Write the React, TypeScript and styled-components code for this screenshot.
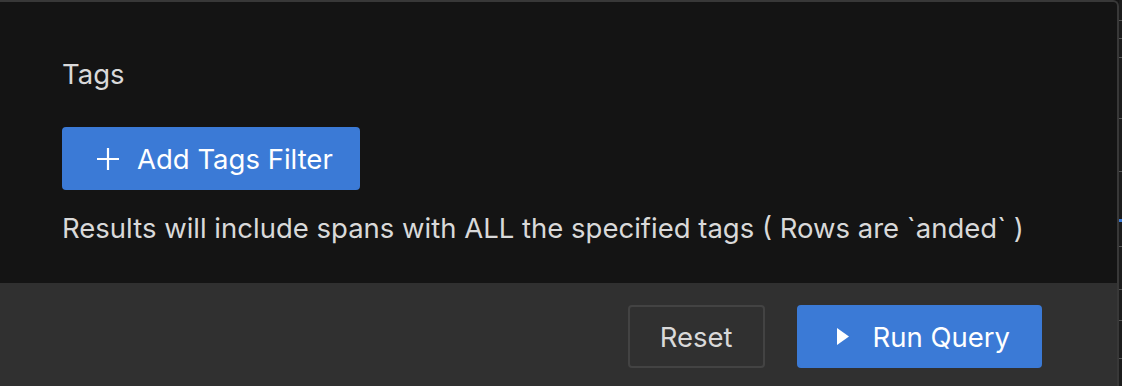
import React from "react";
import styled, { createGlobalStyle } from "styled-components";

const Global = createGlobalStyle`
  html, body { margin: 0; padding: 0; background: #141414; }
  body { font-family: Inter, "Noto Sans", sans-serif; -webkit-font-smoothing: antialiased; }
  #root { height: 386px; }
`;

const Page = styled.div`
  display: flex;
  width: 1122px;
  height: 386px;
  overflow: hidden;
`;

const Panel = styled.section`
  flex: 1;
  display: flex;
  flex-direction: column;
  border-top: 2px solid #383838;
  border-right: 2px solid #383838;
  border-top-right-radius: 6px;
  background: #141414;
  overflow: hidden;
`;

const Body = styled.div`
  flex: 1;
  padding: 56px 0 0 62px;
  display: flex;
  flex-direction: column;
  align-items: flex-start;
`;

const Label = styled.div`
  font-size: 27.5px;
  line-height: 32px;
  color: #d9d9d9;
  font-weight: 400;
`;

const Button = styled.button<{ $variant: "primary" | "secondary" }>`
  display: inline-flex;
  align-items: center;
  height: 63px;
  padding: 0 30px;
  border-radius: 4px;
  font-family: Inter, "Noto Sans", sans-serif;
  font-size: 27.5px;
  font-weight: 400;
  cursor: pointer;
  background: ${(p) => (p.$variant === "primary" ? "#3b7ad6" : "#303030")};
  color: ${(p) => (p.$variant === "primary" ? "#ffffff" : "#d9d9d9")};
  border: 2px solid ${(p) => (p.$variant === "primary" ? "#3b7ad6" : "#434343")};
`;

const AddButton = styled(Button)`
  margin-top: 37px;
  gap: 18px;
  padding-left: 33px;
  padding-right: 25px;
`;

const RunButton = styled(Button)`
  gap: 24px;
  padding-left: 38px;
  padding-right: 30px;
`;

const Hint = styled.p`
  margin: 20px 0 0;
  font-size: 27.5px;
  line-height: 36px;
  color: #d9d9d9;
`;

const Footer = styled.footer`
  height: 103px;
  box-sizing: border-box;
  flex: none;
  background: #303030;
  display: flex;
  align-items: flex-start;
  justify-content: flex-end;
  gap: 32px;
  padding: 22px 75px 0 0;
`;

const Strip = styled.div`
  width: 3px;
  flex: none;
  background:
    linear-gradient(#555 0 0) 0 20px / 3px 1px no-repeat,
    linear-gradient(#555 0 0) 0 38px / 3px 1px no-repeat,
    linear-gradient(#555 0 0) 0 57px / 3px 1px no-repeat,
    linear-gradient(#555 0 0) 0 118px / 3px 1px no-repeat,
    linear-gradient(#555 0 0) 0 171px / 3px 1px no-repeat,
    linear-gradient(#3b7ad6 0 0) 0 219px / 3px 3px no-repeat,
    linear-gradient(#555 0 0) 0 246px / 3px 1px no-repeat,
    linear-gradient(#555 0 0) 0 289px / 3px 1px no-repeat,
    linear-gradient(#555 0 0) 0 320px / 3px 1px no-repeat,
    linear-gradient(#555 0 0) 0 358px / 3px 1px no-repeat,
    #1c1c1c;
`;

const PlusIcon = () => (
  <svg width="22" height="22" viewBox="0 0 22 22" aria-hidden>
    <path d="M11 0v22M0 11h22" stroke="#fff" strokeWidth="2.2" fill="none" />
  </svg>
);

const PlayIcon = () => (
  <svg width="12" height="17" viewBox="0 0 12 17" aria-hidden>
    <path d="M0 0l12 8.5L0 17z" fill="#fff" />
  </svg>
);

export default function App() {
  return (
    <Page>
      <Global />
      <Panel>
        <Body>
          <Label>Tags</Label>
          <AddButton $variant="primary">
            <PlusIcon />
            Add Tags Filter
          </AddButton>
          <Hint>Results will include spans with ALL the specified tags ( Rows are `anded` )</Hint>
        </Body>
        <Footer>
          <Button $variant="secondary">Reset</Button>
          <RunButton $variant="primary">
            <PlayIcon />
            Run Query
          </RunButton>
        </Footer>
      </Panel>
      <Strip />
    </Page>
  );
}
